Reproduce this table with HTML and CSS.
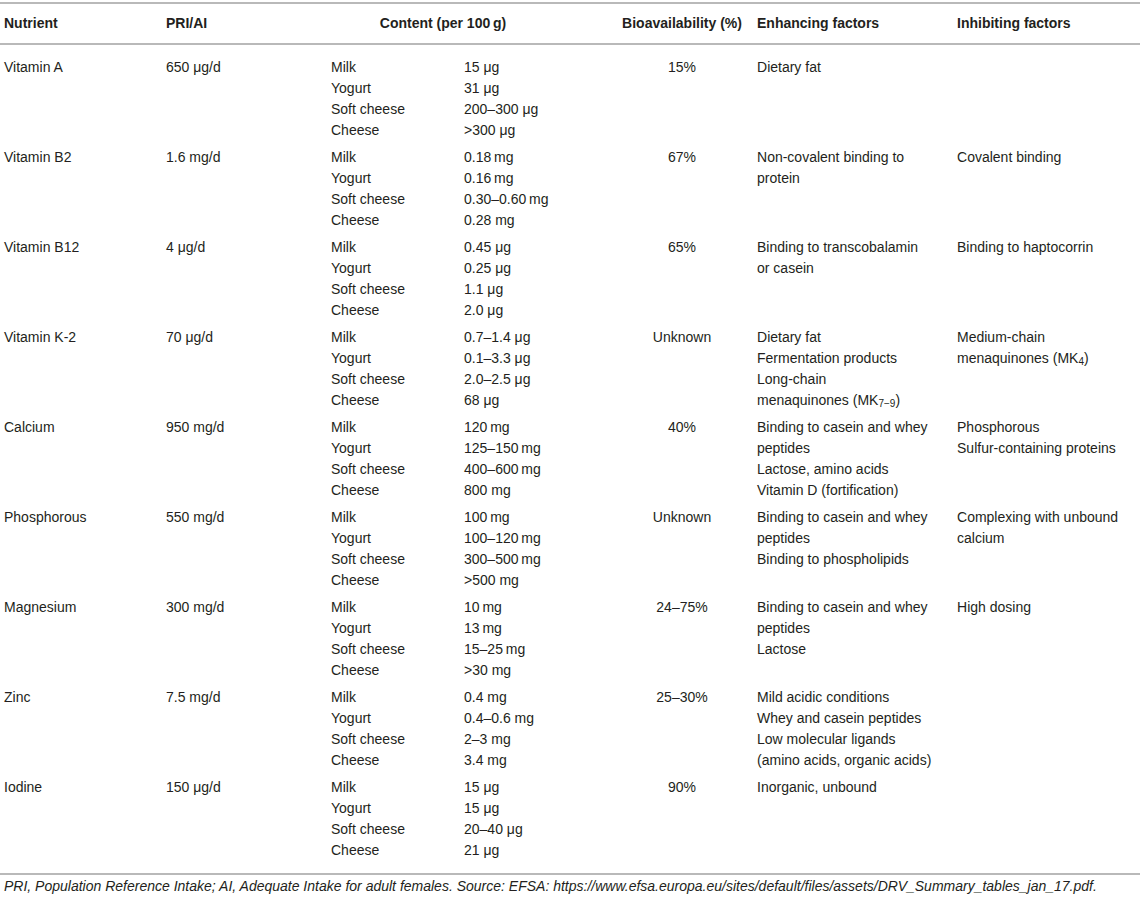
FILE: index.html
```html
<!DOCTYPE html>
<html lang="en">
<head>
<meta charset="utf-8">
<title>Dairy nutrients</title>
<link rel="stylesheet" href="styles.css">
</head>
<body>
<table class="nt">
  <colgroup>
    <col class="c-nut"><col class="c-pri"><col class="c-lab"><col class="c-val"><col class="c-bio"><col class="c-enh"><col class="c-inh">
  </colgroup>
  <thead>
    <tr>
      <th>Nutrient</th>
      <th>PRI/AI</th>
      <th colspan="2" class="h-content">Content (per 100&#8201;g)</th>
      <th class="center">Bioavailability (%)</th>
      <th>Enhancing factors</th>
      <th class="h-inh">Inhibiting factors</th>
    </tr>
  </thead>
  <tbody>
    <tr>
      <td>Vitamin A</td><td>650 μg/d</td>
      <td>Milk<br>Yogurt<br>Soft cheese<br>Cheese</td>
      <td>15 μg<br>31 μg<br>200–300 μg<br>&gt;300 μg</td>
      <td class="center">15%</td>
      <td>Dietary fat</td>
      <td></td>
    </tr>
    <tr>
      <td>Vitamin B2</td><td>1.6 mg/d</td>
      <td>Milk<br>Yogurt<br>Soft cheese<br>Cheese</td>
      <td>0.18&#8201;mg<br>0.16&#8201;mg<br>0.30–0.60&#8201;mg<br>0.28 mg</td>
      <td class="center">67%</td>
      <td>Non-covalent binding to<br>protein</td>
      <td>Covalent binding</td>
    </tr>
    <tr>
      <td>Vitamin B12</td><td>4 μg/d</td>
      <td>Milk<br>Yogurt<br>Soft cheese<br>Cheese</td>
      <td>0.45 μg<br>0.25 μg<br>1.1 μg<br>2.0 μg</td>
      <td class="center">65%</td>
      <td>Binding to transcobalamin<br>or casein</td>
      <td>Binding to haptocorrin</td>
    </tr>
    <tr>
      <td>Vitamin K-2</td><td>70 μg/d</td>
      <td>Milk<br>Yogurt<br>Soft cheese<br>Cheese</td>
      <td>0.7–1.4 μg<br>0.1–3.3 μg<br>2.0–2.5 μg<br>68 μg</td>
      <td class="center">Unknown</td>
      <td>Dietary fat<br>Fermentation products<br>Long-chain<br>menaquinones (MK<sub>7−9</sub>)</td>
      <td>Medium-chain<br>menaquinones (MK<sub>4</sub>)</td>
    </tr>
    <tr>
      <td>Calcium</td><td>950 mg/d</td>
      <td>Milk<br>Yogurt<br>Soft cheese<br>Cheese</td>
      <td>120&#8201;mg<br>125–150&#8201;mg<br>400–600&#8201;mg<br>800 mg</td>
      <td class="center">40%</td>
      <td>Binding to casein and whey<br>peptides<br>Lactose, amino acids<br>Vitamin D (fortification)</td>
      <td>Phosphorous<br>Sulfur-containing proteins</td>
    </tr>
    <tr>
      <td>Phosphorous</td><td>550 mg/d</td>
      <td>Milk<br>Yogurt<br>Soft cheese<br>Cheese</td>
      <td>100&#8201;mg<br>100–120&#8201;mg<br>300–500&#8201;mg<br>&gt;500 mg</td>
      <td class="center">Unknown</td>
      <td>Binding to casein and whey<br>peptides<br>Binding to phospholipids</td>
      <td>Complexing with unbound<br>calcium</td>
    </tr>
    <tr>
      <td>Magnesium</td><td>300 mg/d</td>
      <td>Milk<br>Yogurt<br>Soft cheese<br>Cheese</td>
      <td>10&#8201;mg<br>13&#8201;mg<br>15–25&#8201;mg<br>&gt;30 mg</td>
      <td class="center">24–75%</td>
      <td>Binding to casein and whey<br>peptides<br>Lactose</td>
      <td>High dosing</td>
    </tr>
    <tr>
      <td>Zinc</td><td>7.5 mg/d</td>
      <td>Milk<br>Yogurt<br>Soft cheese<br>Cheese</td>
      <td>0.4 mg<br>0.4–0.6 mg<br>2–3 mg<br>3.4 mg</td>
      <td class="center">25–30%</td>
      <td>Mild acidic conditions<br>Whey and casein peptides<br>Low molecular ligands<br>(amino acids, organic acids)</td>
      <td></td>
    </tr>
    <tr class="last">
      <td>Iodine</td><td>150 μg/d</td>
      <td>Milk<br>Yogurt<br>Soft cheese<br>Cheese</td>
      <td>15 μg<br>15 μg<br>20–40 μg<br>21 μg</td>
      <td class="center">90%</td>
      <td>Inorganic, unbound</td>
      <td></td>
    </tr>
  </tbody>
</table>
<p class="foot">PRI, Population Reference Intake; AI, Adequate Intake for adult females. Source: EFSA: https://www.efsa.europa.eu/sites/default/files/assets/DRV_Summary_tables_jan_17.pdf.</p>
</body>
</html>
```

FILE: styles.css
```css
html, body {
  margin: 0;
  padding: 0;
  background: #ffffff;
}

body {
  font-family: "Liberation Sans", Arial, Helvetica, sans-serif;
  font-size: 14px;
  line-height: 21px;
  color: #231f20;
}

.nt {
  width: 1140px;
  margin-top: 2px;
  border-collapse: collapse;
  table-layout: fixed;
  border-top: 2px solid #b9b9b9;
  border-bottom: 2px solid #b9b9b9;
}

.c-nut { width: 162px; }
.c-pri { width: 165px; }
.c-lab { width: 133px; }
.c-val { width: 151px; }
.c-bio { width: 142px; }
.c-enh { width: 200px; }
.c-inh { width: 187px; }

.nt th {
  text-align: left;
  font-weight: bold;
  padding: 9px 4px 9px 4px;
  white-space: nowrap;
  border-bottom: 2px solid #b9b9b9;
}

.nt th.h-content {
  text-align: center;
  padding-right: 56px;
}

.nt td {
  vertical-align: top;
  text-align: left;
  padding: 0 4px 6px 4px;
  white-space: nowrap;
}

.nt tbody tr:first-child td {
  padding-top: 12px;
}

.nt tr.last td {
  padding-bottom: 12px;
}

.nt .center {
  text-align: center;
}

.nt sub {
  font-size: 10px;
  line-height: 0;
  vertical-align: -2px;
}

.foot {
  margin: 0;
  padding: 1px 4px 0 4px;
  font-style: italic;
  white-space: nowrap;
}
```
